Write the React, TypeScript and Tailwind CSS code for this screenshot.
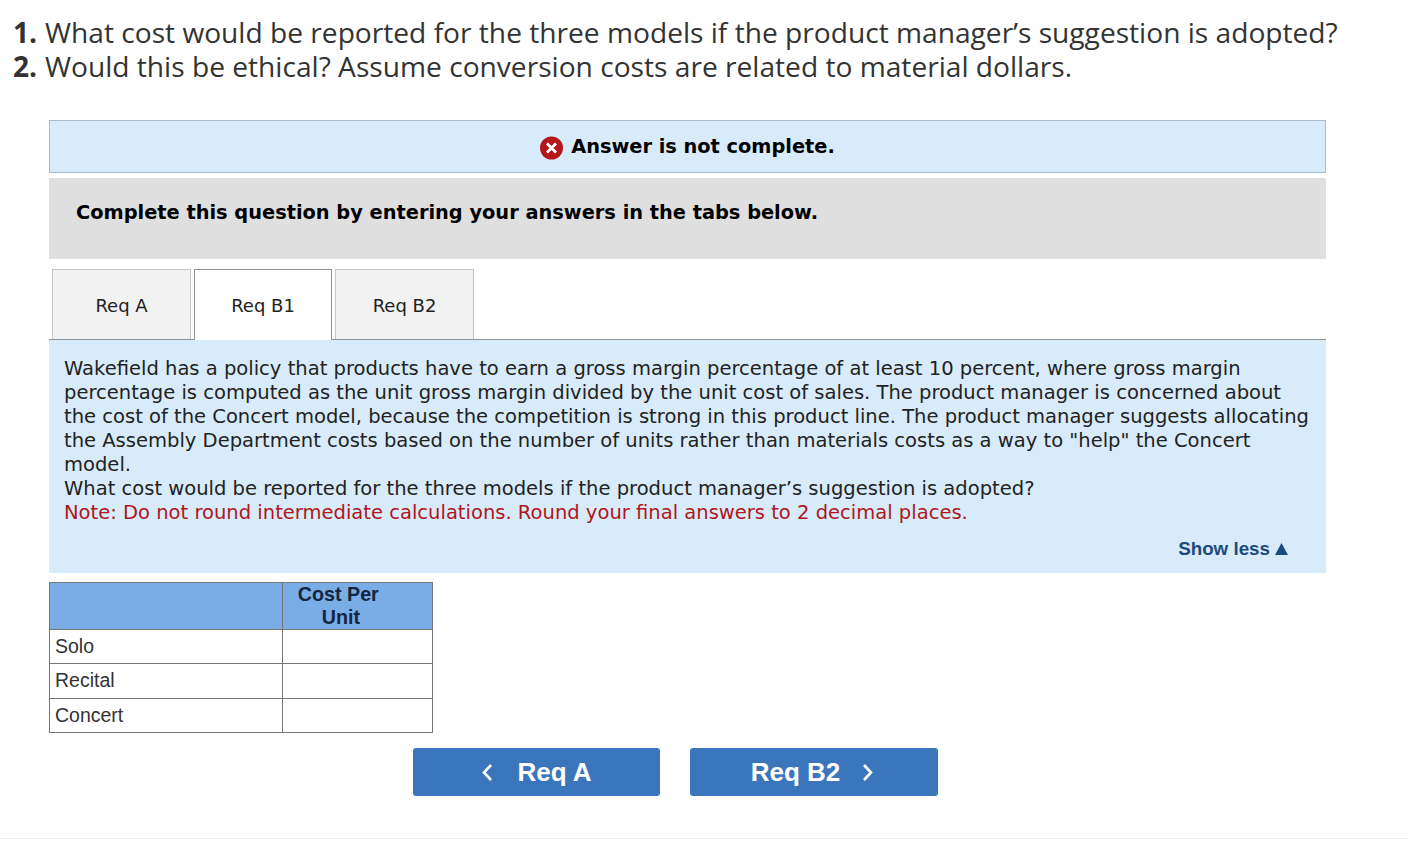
const verdana = 'font-["DejaVu_Sans",sans-serif]'

const rows = [
  { name: 'Solo', height: 'h-[34px]' },
  { name: 'Recital', height: 'h-[35px]' },
  { name: 'Concert', height: 'h-[34px]' },
]

function Tab({ label, active }: { label: string; active?: boolean }) {
  return (
    <div
      className={
        active
          ? 'relative z-10 -mb-px flex h-[71px] w-[138px] items-center justify-center border border-b-0 border-[#8f9499] bg-white text-[18px] text-[#222]'
          : 'flex h-[70px] w-[139px] items-center justify-center border border-b-0 border-[#c4c6c8] bg-[#f2f2f2] pt-[2px] text-[18px] text-[#222]'
      }
    >
      {label}
    </div>
  )
}

export default function App() {
  return (
    <div className="h-[850px] w-[1408px] overflow-hidden bg-white">
      <div className='pt-[15px] font-["Open_Sans",sans-serif] text-[28.15px] leading-[34px] text-[#333]'>
        <div className="flex h-[34px] whitespace-nowrap">
          <b className="w-[37px] shrink-0 text-right font-bold">1.</b>
          <span className="ml-[8px]">What cost would be reported for the three models if the product manager’s suggestion is adopted?</span>
        </div>
        <div className="flex h-[34px] whitespace-nowrap">
          <b className="w-[37px] shrink-0 text-right font-bold">2.</b>
          <span className="ml-[8px]">Would this be ethical? Assume conversion costs are related to material dollars.</span>
        </div>
      </div>

      <div className={`ml-[49px] mt-[37px] w-[1277px] ${verdana}`}>
        <div className="flex h-[53px] items-center justify-center gap-[8px] border border-[#a3bccf] bg-[#d8ebfa] text-[19.35px] font-bold text-black">
          <svg width="23" height="24" viewBox="0 0 23 24" className="mt-[2px]">
            <circle cx="11.5" cy="12" r="11.5" fill="#b5161c" />
            <path d="M7 7.5 16 16.5M16 7.5 7 16.5" stroke="#fff" strokeWidth="2.8" />
          </svg>
          <span>Answer is not complete.</span>
        </div>

        <div className="mt-[5px] h-[81px] bg-[#dfdfdf] pl-[27px] pt-[22px] text-[19.38px] font-bold leading-[26px] text-black">
          Complete this question by entering your answers in the tabs below.
        </div>

        <div className="mt-[10px] flex items-start gap-[3px] border-b border-[#8f9499] pl-[3px]">
          <Tab label="Req A" />
          <Tab label="Req B1" active />
          <Tab label="Req B2" />
        </div>

        <div className="h-[233px] bg-[#d8ebfa] pl-[15px] pr-[12px] pt-[17px] text-[19.55px] leading-[24px] text-[#222]">
          <p>
            Wakefield has a policy that products have to earn a gross margin percentage of at least 10 percent, where gross margin percentage is computed as the unit gross margin divided by the unit cost of sales. The product manager is concerned about the cost of the Concert model, because the competition is strong in this product line. The product manager suggests allocating the Assembly Department costs based on the number of units rather than materials costs as a way to "help" the Concert model.
          </p>
          <p>What cost would be reported for the three models if the product manager’s suggestion is adopted?</p>
          <p className="text-[#b0161c]">Note: Do not round intermediate calculations. Round your final answers to 2 decimal places.</p>
          <div className='mt-[12px] flex items-center justify-end gap-[5px] pr-[26px] font-["Liberation_Sans",sans-serif] text-[18.8px] font-bold leading-[24px] text-[#1d4a7d]'>
            Show less
            <svg width="13" height="12" viewBox="0 0 13 12"><path d="M6.5 0 13 12H0z" fill="#1d4a7d" /></svg>
          </div>
        </div>

        <table className='mt-[9px] w-[384px] table-fixed border-collapse font-["Liberation_Sans",sans-serif] text-[19.5px] text-[#333]'>
          <thead>
            <tr className="h-[47px] bg-[#7aace6]">
              <th className="w-[233px] border border-[#777]" />
              <th className="border border-[#777] pr-[33px] text-[19.7px] font-bold leading-[23px] text-[#14263f]">
                Cost Per&nbsp;<br />Unit
              </th>
            </tr>
          </thead>
          <tbody>
            {rows.map((r) => (
              <tr key={r.name} className={r.height}>
                <td className="border border-[#777] pb-[2px] pl-[5px] leading-[22px]">{r.name}</td>
                <td className="border border-[#777]" />
              </tr>
            ))}
          </tbody>
        </table>
      </div>

      <div className='ml-[413px] mt-[15px] flex gap-[30px] font-["Liberation_Sans",sans-serif] text-[26px] font-bold text-white'>
        <div className="flex h-[48px] w-[247px] items-center justify-center gap-[24px] rounded-[3px] bg-[#3b76bc]">
          <svg width="12" height="18" viewBox="0 0 12 18" fill="none"><path d="M10 2 3 9.5 10 17" stroke="#fff" strokeWidth="2.6" /></svg>
          <span>Req A</span>
        </div>
        <div className="flex h-[48px] w-[248px] items-center justify-center gap-[22px] rounded-[3px] bg-[#3b76bc] pr-[3px]">
          <span>Req B2</span>
          <svg width="12" height="18" viewBox="0 0 12 18" fill="none"><path d="M2 2 9 9.5 2 17" stroke="#fff" strokeWidth="2.6" /></svg>
        </div>
      </div>

      <div className="mt-[42px] border-t border-[#eeeeee]" />
    </div>
  )
}
